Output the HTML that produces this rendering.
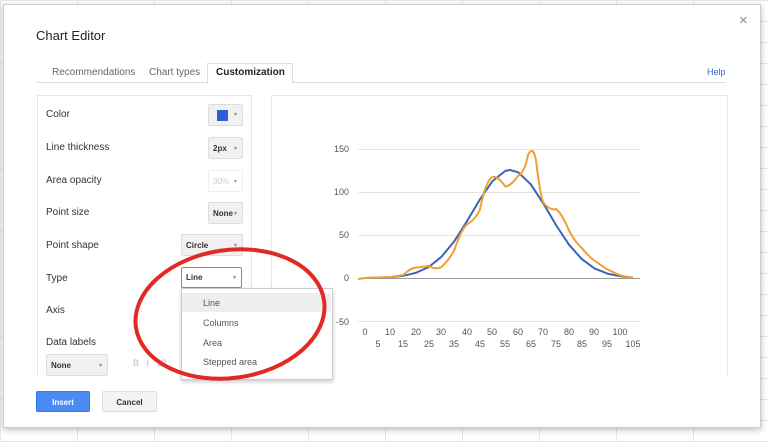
<!DOCTYPE html>
<html><head><style>
body{margin:0;width:768px;height:442px;overflow:hidden;background:#fff;font-family:"Liberation Sans",sans-serif;position:relative;
background-image:linear-gradient(90deg,#e6e6e6 1px,transparent 1px),linear-gradient(#e6e6e6 1px,transparent 1px);background-size:77px 100%,100% 21px;}
.a{position:absolute}
.dlg{left:3px;top:4px;width:756px;height:422px;background:#fff;border:1px solid #ccc;box-shadow:0 2px 6px rgba(0,0,0,.25)}
.lbl{font-size:10px;color:#333;left:46px}
.btn{background:#f1f1f1;border:1px solid #ddd;border-radius:2px;font-size:8px;font-weight:bold;color:#333;box-sizing:border-box;padding:0 0 0 4px;line-height:20px}
.btn:after{content:"▾";font-size:6px;color:#999;position:absolute;right:5px}
.t{font-size:9px;color:#555}
</style></head><body>
<div class="a dlg"></div>
<div class="a" style="left:36px;top:28px;font-size:13px;color:#222">Chart Editor</div>
<div class="a" style="left:739px;top:12px;font-size:15px;color:#888">×</div>
<div class="a" style="left:37px;top:82px;width:689px;height:1px;background:#ddd"></div>
<div class="a" style="left:52px;top:67px;font-size:10px;color:#666">Recommendations</div>
<div class="a" style="left:149px;top:67px;font-size:10px;color:#666">Chart types</div>
<div class="a" style="left:207px;top:63px;width:84px;height:20px;background:#fff;border:1px solid #ddd;border-bottom:none"></div>
<div class="a" style="left:216px;top:67px;font-size:10px;font-weight:bold;color:#222">Customization</div>
<div class="a" style="left:707px;top:67px;font-size:9px;color:#3366cc">Help</div>
<div class="a" style="left:37px;top:95px;width:213px;height:280px;border:1px solid #e6e6e6;border-bottom:none"></div>
<div class="a" style="left:271px;top:95px;width:455px;height:280px;border:1px solid #e6e6e6;border-bottom:none"></div>
<div class="a lbl" style="top:109px">Color</div>
<div class="a lbl" style="top:142px">Line thickness</div>
<div class="a lbl" style="top:175px">Area opacity</div>
<div class="a lbl" style="top:207px">Point size</div>
<div class="a lbl" style="top:240px">Point shape</div>
<div class="a lbl" style="top:273px">Type</div>
<div class="a lbl" style="top:305px">Axis</div>
<div class="a lbl" style="top:337px">Data labels</div>
<div class="a btn" style="left:208px;top:104px;width:35px;height:22px"><span style="display:inline-block;width:11px;height:11px;background:#2d5fd0;margin:5px 0 0 4px;vertical-align:top"></span></div>
<div class="a btn" style="left:208px;top:137px;width:35px;height:22px;line-height:22px">2px</div>
<div class="a btn" style="left:208px;top:170px;width:35px;height:22px;line-height:22px;background:#fff;border-color:#eee;color:#ccc;font-weight:normal">30%</div>
<div class="a btn" style="left:208px;top:202px;width:35px;height:22px;line-height:22px">None</div>
<div class="a btn" style="left:181px;top:234px;width:62px;height:22px;line-height:22px">Circle</div>
<div class="a btn" style="left:181px;top:267px;width:61px;height:21px;background:#fff;border-color:#6b8fd6;line-height:20px">Line</div>
<div class="a btn" style="left:46px;top:354px;width:62px;height:22px;line-height:22px">None</div>
<div class="a" style="left:133px;top:358px;font-size:9px;color:#bbb">B &nbsp; I &nbsp; 12</div>
<div class="a" style="left:181px;top:288px;width:150px;height:90px;background:#fff;border:1px solid #ccc;box-shadow:0 2px 4px rgba(0,0,0,.2)"></div>
<div class="a" style="left:182px;top:293px;width:149px;height:19px;background:#eee"></div>
<div class="a t" style="left:203px;top:298px">Line</div>
<div class="a t" style="left:203px;top:318px">Columns</div>
<div class="a t" style="left:203px;top:338px">Area</div>
<div class="a t" style="left:203px;top:357px">Stepped area</div>
<div class="a" style="left:36px;top:391px;width:54px;height:21px;background:#4a8af4;border:1px solid #3079ed;border-radius:2px;color:#fff;font-size:8px;font-weight:bold;text-align:center;line-height:21px;box-sizing:border-box">Insert</div>
<div class="a" style="left:102px;top:391px;width:55px;height:21px;background:#f3f3f3;border:1px solid #ddd;border-radius:2px;color:#333;font-size:8px;font-weight:bold;text-align:center;line-height:21px;box-sizing:border-box">Cancel</div>
<svg class="a" style="left:0;top:0" width="768" height="442">
<g stroke="#e4e4e4" stroke-width="1"><line x1="358" y1="149.5" x2="640" y2="149.5"/><line x1="358" y1="192.5" x2="640" y2="192.5"/><line x1="358" y1="235.5" x2="640" y2="235.5"/><line x1="358" y1="321.5" x2="640" y2="321.5"/></g>
<line x1="358" y1="278.5" x2="640" y2="278.5" stroke="#999"/>
<g font-family="Liberation Sans" font-size="9" fill="#555" text-anchor="end"><text x="349" y="152">150</text><text x="349" y="195">100</text><text x="349" y="238">50</text><text x="349" y="281">0</text><text x="349" y="325">-50</text></g>
<g font-family="Liberation Sans" font-size="9" fill="#555" text-anchor="middle">
<text x="365" y="335">0</text><text x="390" y="335">10</text><text x="416" y="335">20</text><text x="441" y="335">30</text><text x="467" y="335">40</text><text x="492" y="335">50</text><text x="518" y="335">60</text><text x="543" y="335">70</text><text x="569" y="335">80</text><text x="594" y="335">90</text><text x="620" y="335">100</text>
<text x="378" y="347">5</text><text x="403" y="347">15</text><text x="429" y="347">25</text><text x="454" y="347">35</text><text x="480" y="347">45</text><text x="505" y="347">55</text><text x="531" y="347">65</text><text x="556" y="347">75</text><text x="582" y="347">85</text><text x="607" y="347">95</text><text x="633" y="347">105</text></g>
<polyline fill="none" stroke="#3b63b8" stroke-width="2" stroke-linejoin="round" points="365,278 390.5,277.2 403.3,275.8 416,272.8 428.8,267 441.5,256.7 454.3,241.2 467,221.1 479.8,199.6 492.5,181.1 505.3,170.9 510,170 518,172.2 530.8,184.3 543.5,203.8 556.3,225.5 569,244.7 581.8,259.1 594.5,268.4 607.3,273.6 620,276.2 632.8,277.6"/>
<path fill="none" stroke="#f0a030" stroke-width="2" stroke-linejoin="round" d="M358,279 L365,278 L390.5,277.1 L403.3,275 Q410,268 416,267.6 L428.8,266 Q436,270 441.5,267 Q449,260 454.3,250 Q461,230 467,224.4 Q475,220 479.8,210 Q486,180 492.5,176.9 Q498,176 505.3,186.4 Q511,186 518,176 Q525,172 528,155 Q533,145 536,160 Q540,195 543.5,202.8 Q550,211 556.3,209 Q562,214 569,230.5 Q575,242 581.8,248 Q588,256 594.5,260.7 L607.3,269.4 L620,275.4 L632.8,278"/>
<ellipse cx="230" cy="314" rx="95" ry="64" transform="rotate(-8 230 314)" fill="none" stroke="#e02a22" stroke-width="4"/>
</svg>
</body></html>
